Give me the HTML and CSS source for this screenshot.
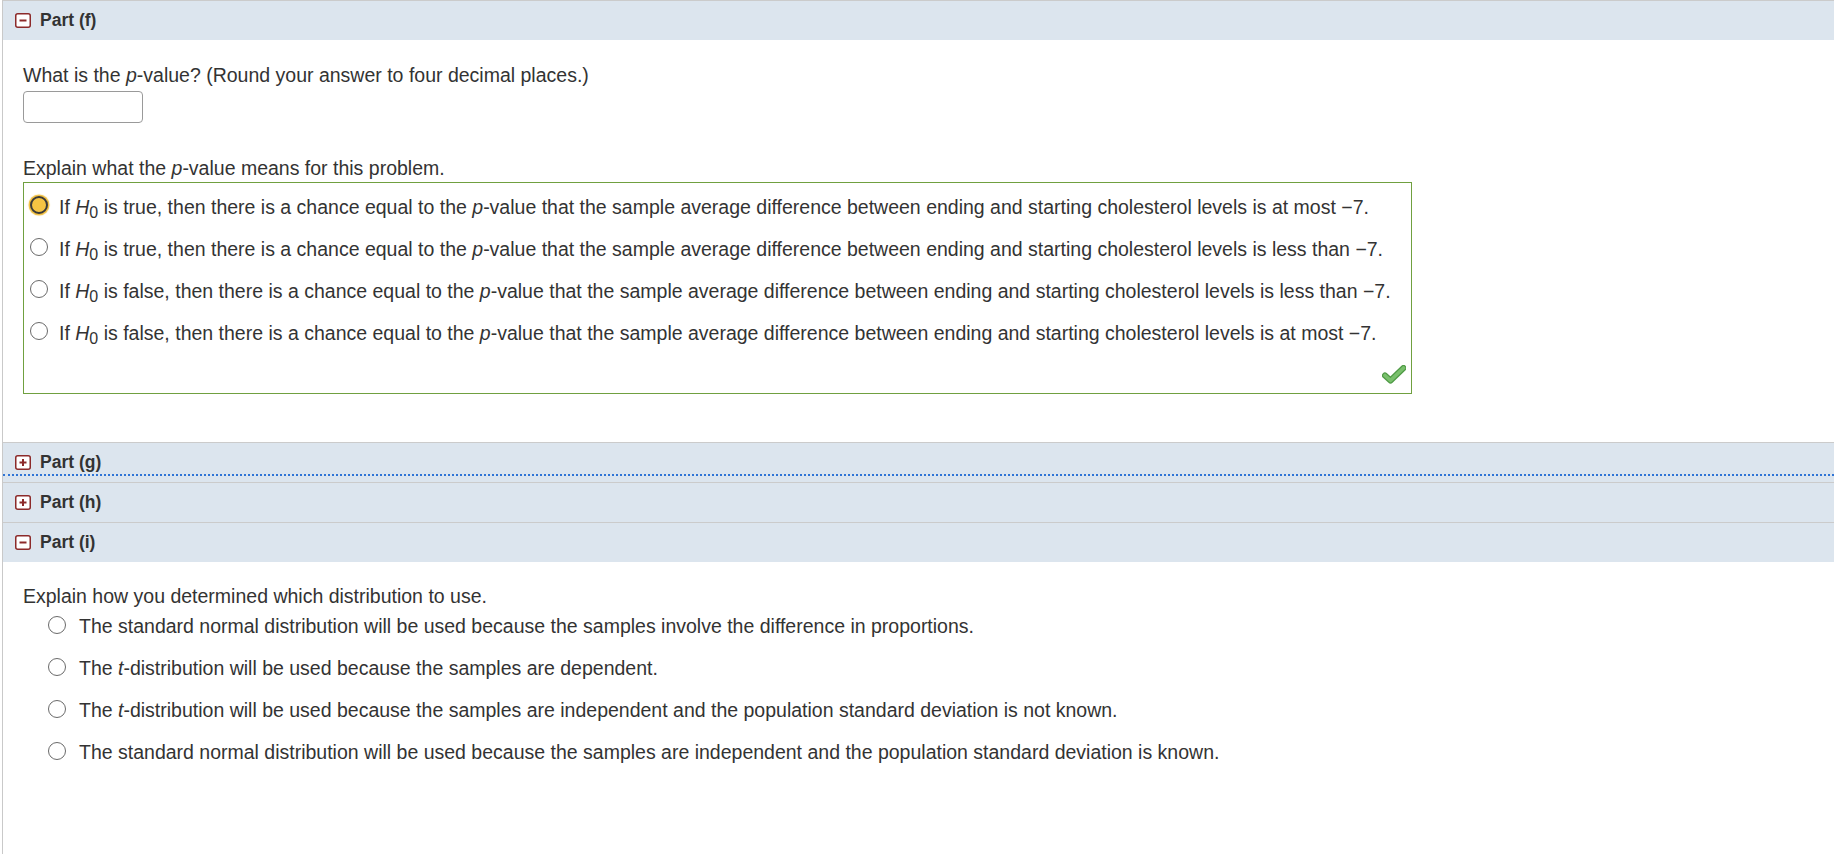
FILE: index.html
```html
<!DOCTYPE html>
<html lang="en">
<head>
    <meta charset="UTF-8">
    <title>Part (f) - Part (i)</title>
    <link rel="stylesheet" href="styles.css">
</head>
<body>
<div class="page">

    <div class="part-head">
        <svg class="toggle" width="16" height="15" viewBox="0 0 16 15"><rect x="0.75" y="0.75" width="14.5" height="13.5" rx="2" fill="#fff" stroke="#8c2a2a" stroke-width="1.5"/><path d="M4.5 7.5h7" stroke="#8c2a2a" stroke-width="2"/></svg>
        <span>Part (f)</span>
    </div>
    <div class="part-body part-f">
        <p class="prompt">What is the <i>p</i>-value? (Round your answer to four decimal places.)</p>
        <input type="text" class="answer">
        <p class="prompt explain">Explain what the <i>p</i>-value means for this problem.</p>

        <div class="choice-box">
            <label class="choice"><span class="radio picked"></span><span>If <i>H</i><sub>0</sub> is true, then there is a chance equal to the <i>p</i>-value that the sample average difference between ending and starting cholesterol levels is at most &minus;7.</span></label>
            <label class="choice"><span class="radio"></span><span>If <i>H</i><sub>0</sub> is true, then there is a chance equal to the <i>p</i>-value that the sample average difference between ending and starting cholesterol levels is less than &minus;7.</span></label>
            <label class="choice"><span class="radio"></span><span>If <i>H</i><sub>0</sub> is false, then there is a chance equal to the <i>p</i>-value that the sample average difference between ending and starting cholesterol levels is less than &minus;7.</span></label>
            <label class="choice"><span class="radio"></span><span>If <i>H</i><sub>0</sub> is false, then there is a chance equal to the <i>p</i>-value that the sample average difference between ending and starting cholesterol levels is at most &minus;7.</span></label>
            <div class="mark">
                <svg width="24" height="19" viewBox="0 0 24 19"><path d="M3 10.5l5.5 5L21.5 3" fill="none" stroke="#4f9a45" stroke-width="6" stroke-linecap="round" stroke-linejoin="round"/><path d="M3 10.5l5.5 5L21.5 3" fill="none" stroke="#79c06c" stroke-width="3.6" stroke-linecap="round" stroke-linejoin="round"/></svg>
            </div>
        </div>
    </div>

    <div class="part-head focused">
        <svg class="toggle" width="16" height="15" viewBox="0 0 16 15"><rect x="0.75" y="0.75" width="14.5" height="13.5" rx="2" fill="#fff" stroke="#8c2a2a" stroke-width="1.5"/><path d="M4.5 7.5h7M8 4v7" stroke="#8c2a2a" stroke-width="2"/></svg>
        <span>Part (g)</span>
    </div>
    <div class="part-head">
        <svg class="toggle" width="16" height="15" viewBox="0 0 16 15"><rect x="0.75" y="0.75" width="14.5" height="13.5" rx="2" fill="#fff" stroke="#8c2a2a" stroke-width="1.5"/><path d="M4.5 7.5h7M8 4v7" stroke="#8c2a2a" stroke-width="2"/></svg>
        <span>Part (h)</span>
    </div>
    <div class="part-head">
        <svg class="toggle" width="16" height="15" viewBox="0 0 16 15"><rect x="0.75" y="0.75" width="14.5" height="13.5" rx="2" fill="#fff" stroke="#8c2a2a" stroke-width="1.5"/><path d="M4.5 7.5h7" stroke="#8c2a2a" stroke-width="2"/></svg>
        <span>Part (i)</span>
    </div>
    <div class="part-body part-i">
        <p class="prompt">Explain how you determined which distribution to use.</p>
        <div class="plain-choices">
            <label class="choice"><span class="radio"></span><span>The standard normal distribution will be used because the samples involve the difference in proportions.</span></label>
            <label class="choice"><span class="radio"></span><span>The <i>t</i>-distribution will be used because the samples are dependent.</span></label>
            <label class="choice"><span class="radio"></span><span>The <i>t</i>-distribution will be used because the samples are independent and the population standard deviation is not known.</span></label>
            <label class="choice"><span class="radio"></span><span>The standard normal distribution will be used because the samples are independent and the population standard deviation is known.</span></label>
        </div>
    </div>

</div>
</body>
</html>
```

FILE: styles.css
```css
* {
    box-sizing: border-box;
}

body {
    margin: 0;
    font-family: "Liberation Sans", Arial, Helvetica, sans-serif;
    color: #333;
    background-color: #fff;
}

/* whole question column, grey rule on the left */
.page {
    margin-left: 2px;
    border-left: 1px solid #c9c9c9;
    min-height: 854px;
}

/* collapsible part headers */
.part-head {
    position: relative;
    display: flex;
    align-items: center;
    gap: 9px;
    height: 40px;
    padding-left: 12px;
    border-top: 1px solid #cbcbcb;
    background-color: #dce5ee;
    font-size: 17.5px;
    font-weight: bold;
    color: #333;
}

.toggle {
    flex: none;
}

/* keyboard focus ring on part (g) */
.part-head.focused::after {
    content: "";
    position: absolute;
    left: 0;
    right: 0;
    top: 31px;
    border-top: 2px dotted #2f74d6;
}

.part-body {
    padding: 24px 20px 0;
    font-size: 19.5px;
}

.part-f {
    padding-bottom: 48px;
}

.part-i {
    padding-top: 23px;
}

.prompt {
    margin: 0;
    line-height: 22px;
}

.explain {
    margin-top: 34px;
}

.answer {
    display: block;
    width: 120px;
    height: 32px;
    margin-top: 5px;
    border: 1px solid #9a9a9a;
    border-radius: 4px;
    font: inherit;
}

/* graded answer box */
.choice-box {
    width: 1389px;
    margin-top: 3px;
    padding: 3px 5px 9px 6px;
    border: 1px solid #70a040;
}

.choice {
    display: flex;
    align-items: center;
    height: 42px;
    line-height: 42px;
    white-space: nowrap;
}

.choice-box .radio {
    margin-right: 11px;
    margin-top: -4px;
}

.plain-choices {
    margin-top: -2px;
}

.plain-choices .choice {
    padding-left: 25px;
}

.plain-choices .radio {
    margin-right: 13px;
    margin-top: -2px;
}

.radio {
    flex: none;
    width: 18px;
    height: 18px;
    border: 1.5px solid #6a6a6a;
    border-radius: 50%;
    background-color: #fff;
}

.radio.picked {
    border: 2.5px solid #3a3a3a;
    background-color: #f5c443;
    box-shadow: 0 0 1px 1.5px #f0bd3a;
}

sub {
    font-size: 16px;
    vertical-align: -4px;
    line-height: 0;
}

.mark {
    display: flex;
    justify-content: flex-end;
    margin-top: 11px;
    line-height: 0;
}
```
